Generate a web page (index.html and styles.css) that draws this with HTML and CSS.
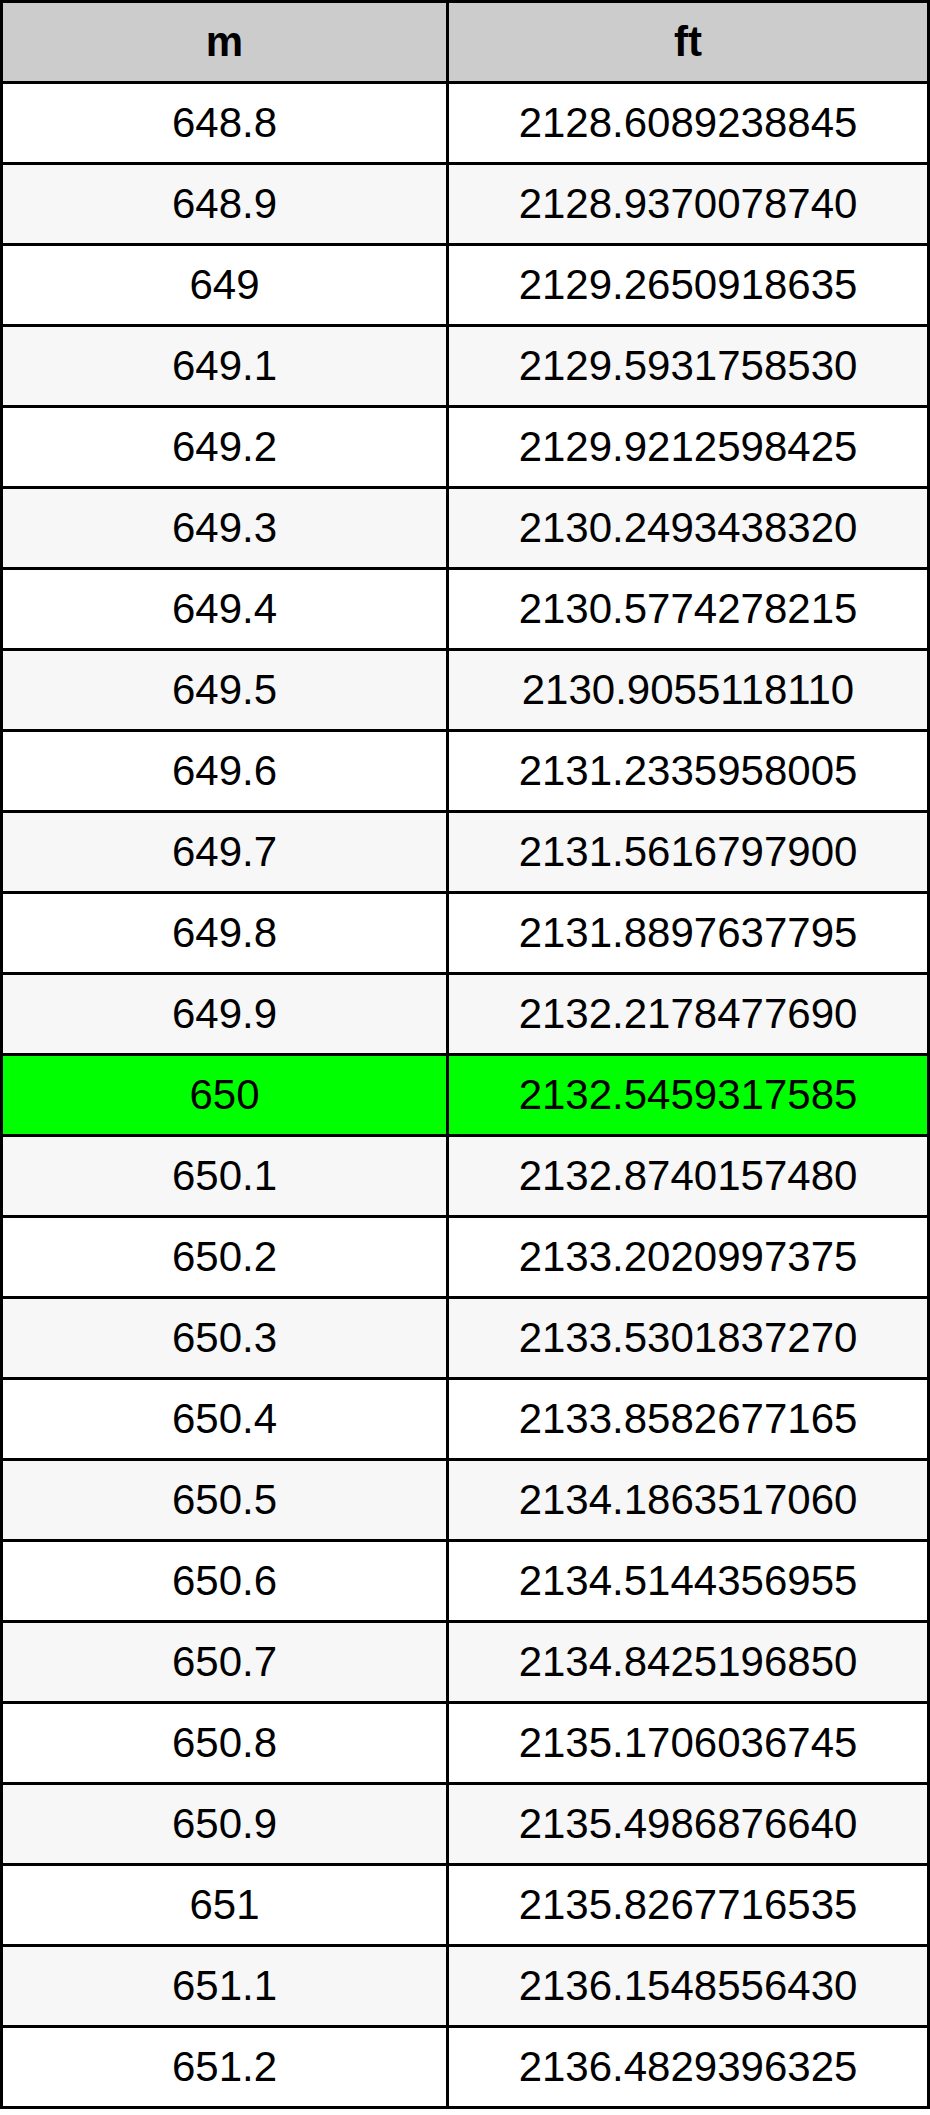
FILE: index.html
```html
<!DOCTYPE html>
<html>
<head>
<meta charset="utf-8">
<link rel="stylesheet" href="styles.css">
</head>
<body>
<div class="table">
  <div class="cell head">m</div><div class="cell head">ft</div>
  <div class="cell">648.8</div><div class="cell">2128.6089238845</div>
  <div class="cell alt">648.9</div><div class="cell alt">2128.9370078740</div>
  <div class="cell">649</div><div class="cell">2129.2650918635</div>
  <div class="cell alt">649.1</div><div class="cell alt">2129.5931758530</div>
  <div class="cell">649.2</div><div class="cell">2129.9212598425</div>
  <div class="cell alt">649.3</div><div class="cell alt">2130.2493438320</div>
  <div class="cell">649.4</div><div class="cell">2130.5774278215</div>
  <div class="cell alt">649.5</div><div class="cell alt">2130.9055118110</div>
  <div class="cell">649.6</div><div class="cell">2131.2335958005</div>
  <div class="cell alt">649.7</div><div class="cell alt">2131.5616797900</div>
  <div class="cell">649.8</div><div class="cell">2131.8897637795</div>
  <div class="cell alt">649.9</div><div class="cell alt">2132.2178477690</div>
  <div class="cell hl">650</div><div class="cell hl">2132.5459317585</div>
  <div class="cell alt">650.1</div><div class="cell alt">2132.8740157480</div>
  <div class="cell">650.2</div><div class="cell">2133.2020997375</div>
  <div class="cell alt">650.3</div><div class="cell alt">2133.5301837270</div>
  <div class="cell">650.4</div><div class="cell">2133.8582677165</div>
  <div class="cell alt">650.5</div><div class="cell alt">2134.1863517060</div>
  <div class="cell">650.6</div><div class="cell">2134.5144356955</div>
  <div class="cell alt">650.7</div><div class="cell alt">2134.8425196850</div>
  <div class="cell">650.8</div><div class="cell">2135.1706036745</div>
  <div class="cell alt">650.9</div><div class="cell alt">2135.4986876640</div>
  <div class="cell">651</div><div class="cell">2135.8267716535</div>
  <div class="cell alt">651.1</div><div class="cell alt">2136.1548556430</div>
  <div class="cell">651.2</div><div class="cell">2136.4829396325</div>
</div>
</body>
</html>
```
FILE: styles.css
```css
html, body {
  margin: 0;
  padding: 0;
  background: #ffffff;
}
.table {
  display: grid;
  grid-template-columns: 443px 478px;
  grid-auto-rows: 78px;
  gap: 3px;
  padding: 3px;
  width: 930px;
  box-sizing: border-box;
  background: #000000;
  font-family: "Liberation Sans", Arial, sans-serif;
  font-size: 42px;
  color: #000000;
}
.cell {
  background: #ffffff;
  display: flex;
  align-items: center;
  justify-content: center;
}
.cell.alt {
  background: #f7f7f7;
}
.cell.head {
  background: #cccccc;
  font-weight: bold;
}
.cell.hl {
  background: #00ff00;
}
```
